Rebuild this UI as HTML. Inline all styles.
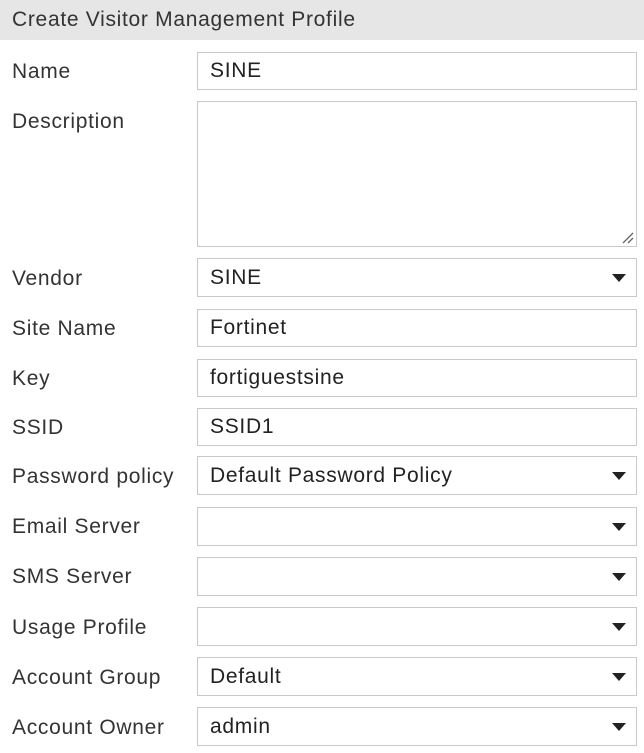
<!DOCTYPE html><html><head><style>
body{margin:0;width:644px;height:753px;background:#fff;font-family:"Liberation Sans",sans-serif;color:#333;position:relative;overflow:hidden;letter-spacing:0.7px}
.h{position:absolute;left:0;top:0;width:644px;height:40px;background:#e6e6e6;font-size:21px;line-height:40px;padding-left:12px;box-sizing:border-box;color:#333}
.l{position:absolute;left:12px;font-size:21px;color:#333;margin-top:1px}
.b{position:absolute;left:197px;width:440px;border:1px solid #c9c9c9;box-sizing:border-box;font-size:21px;padding-left:12px;color:#222}
.a{position:absolute;right:10px;top:50%;margin-top:-4px;width:0;height:0;border-left:7px solid transparent;border-right:7px solid transparent;border-top:8px solid #222}
</style></head><body>
<div class="h">Create Visitor Management Profile</div>
<div class="l" style="top:59px">Name</div><div class="b" style="top:52px;height:38px;line-height:36px">SINE</div>
<div class="l" style="top:109px">Description</div><div class="b" style="top:101px;height:146px">
<svg style="position:absolute;right:2px;bottom:2px" width="12" height="12"><path d="M1 11L11 1M6 11L11 6" stroke="#666" stroke-width="1.3"/></svg></div>
<div class="l" style="top:266px">Vendor</div><div class="b" style="top:258px;height:39px;line-height:37px">SINE<div class="a"></div></div>
<div class="l" style="top:316px">Site Name</div><div class="b" style="top:309px;height:38px;line-height:36px">Fortinet</div>
<div class="l" style="top:366px">Key</div><div class="b" style="top:359px;height:38px;line-height:36px">fortiguestsine</div>
<div class="l" style="top:415px">SSID</div><div class="b" style="top:408px;height:38px;line-height:36px">SSID1</div>
<div class="l" style="top:464px">Password policy</div><div class="b" style="top:456px;height:39px;line-height:37px">Default Password Policy<div class="a"></div></div>
<div class="l" style="top:514px">Email Server</div><div class="b" style="top:507px;height:39px"><div class="a"></div></div>
<div class="l" style="top:564px">SMS Server</div><div class="b" style="top:557px;height:39px"><div class="a"></div></div>
<div class="l" style="top:615px">Usage Profile</div><div class="b" style="top:607px;height:39px"><div class="a"></div></div>
<div class="l" style="top:665px">Account Group</div><div class="b" style="top:657px;height:39px;line-height:37px">Default<div class="a"></div></div>
<div class="l" style="top:715px">Account Owner</div><div class="b" style="top:707px;height:39px;line-height:37px">admin<div class="a"></div></div>
</body></html>
